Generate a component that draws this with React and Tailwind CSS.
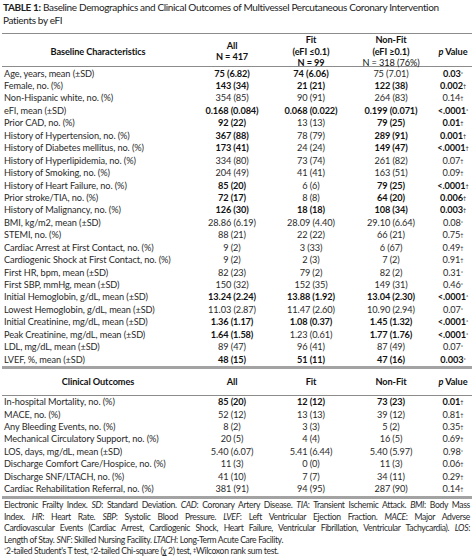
import React from 'react';

// [label, all, fit, nonFit, p, mark, bold flags for all/fit/nonFit/p]
const baseline = [
  ['Age, years, mean (±SD)', '75 (6.82)', '74 (6.06)', '75 (7.01)', '0.03', '*', '1101'],
  ['Female, no. (%)', '143 (34)', '21 (21)', '122 (38)', '0.002', '†', '1111'],
  ['Non-Hispanic white, no. (%)', '354 (85)', '90 (91)', '264 (83)', '0.14', '†', '0000'],
  ['eFI, mean (±SD)', '0.168 (0.084)', '0.068 (0.022)', '0.199 (0.071)', '<.0001', '*', '1111'],
  ['Prior CAD, no. (%)', '92 (22)', '13 (13)', '79 (25)', '0.01', '†', '1011'],
  ['History of Hypertension, no. (%)', '367 (88)', '78 (79)', '289 (91)', '0.001', '†', '1011'],
  ['History of Diabetes mellitus, no. (%)', '173 (41)', '24 (24)', '149 (47)', '<.0001', '†', '1011'],
  ['History of Hyperlipidemia, no. (%)', '334 (80)', '73 (74)', '261 (82)', '0.07', '†', '0000'],
  ['History of Smoking, no. (%)', '204 (49)', '41 (41)', '163 (51)', '0.09', '†', '0000'],
  ['History of Heart Failure, no. (%)', '85 (20)', '6 (6)', '79 (25)', '<.0001', '†', '1011'],
  ['Prior stroke/TIA, no. (%)', '72 (17)', '8 (8)', '64 (20)', '0.006', '†', '1011'],
  ['History of Malignancy, no. (%)', '126 (30)', '18 (18)', '108 (34)', '0.003', '†', '1111'],
  ['BMI, kg/m2, mean (±SD)', '28.86 (6.19)', '28.09 (4.40)', '29.10 (6.64)', '0.08', '*', '0000'],
  ['STEMI, no. (%)', '88 (21)', '22 (22)', '66 (21)', '0.75', '†', '0000'],
  ['Cardiac Arrest at First Contact, no. (%)', '9 (2)', '3 (33)', '6 (67)', '0.49', '†', '0000'],
  ['Cardiogenic Shock at First Contact, no. (%)', '9 (2)', '2 (3)', '7 (2)', '0.91', '†', '0000'],
  ['First HR, bpm, mean (±SD)', '82 (23)', '79 (2)', '82 (2)', '0.31', '*', '0000'],
  ['First SBP, mmHg, mean (±SD)', '150 (32)', '152 (35)', '149 (31)', '0.46', '*', '0000'],
  ['Initial Hemoglobin, g/dL, mean (±SD)', '13.24 (2.24)', '13.88 (1.92)', '13.04 (2.30)', '<.0001', '*', '1111'],
  ['Lowest Hemoglobin, g/dL, mean (±SD)', '11.03 (2.87)', '11.47 (2.60)', '10.90 (2.94)', '0.07', '*', '0000'],
  ['Initial Creatinine, mg/dL, mean (±SD)', '1.36 (1.17)', '1.08 (0.37)', '1.45 (1.32)', '<.0001', '*', '1111'],
  ['Peak Creatinine, mg/dL, mean (±SD)', '1.64 (1.58)', '1.23 (0.61)', '1.77 (1.76)', '<.0001', '*', '1011'],
  ['LDL, mg/dL, mean (±SD)', '89 (47)', '96 (41)', '87 (49)', '0.07', '*', '0000'],
  ['LVEF, %, mean (±SD)', '48 (15)', '51 (11)', '47 (16)', '0.003', '*', '1111'],
];

const outcomes = [
  ['In-hospital Mortality, no. (%)', '85 (20)', '12 (12)', '73 (23)', '0.01', '†', '1111'],
  ['MACE, no. (%)', '52 (12)', '13 (13)', '39 (12)', '0.81', '†', '0000'],
  ['Any Bleeding Events, no. (%)', '8 (2)', '3 (3)', '5 (2)', '0.35', '†', '0000'],
  ['Mechanical Circulatory Support, no. (%)', '20 (5)', '4 (4)', '16 (5)', '0.69', '†', '0000'],
  ['LOS, days, mg/dL, mean (±SD)', '5.40 (6.07)', '5.41 (6.44)', '5.40 (5.97)', '0.98', '*', '0000'],
  ['Discharge Comfort Care/Hospice, no. (%)', '11 (3)', '0 (0)', '11 (3)', '0.06', '†', '0000'],
  ['Discharge SNF/LTACH, no. (%)', '41 (10)', '7 (7)', '34 (11)', '0.29', '†', '0000'],
  ['Cardiac Rehabilitation Referral, no. (%)', '381 (91)', '94 (95)', '287 (90)', '0.14', '†', '0000'],
];

const cols = 'grid grid-cols-[188px_84px_74px_86px_38px]';

function Row({ r }) {
  const [label, a, f, n, p, mark, bold] = r;
  const w = (i) => (bold[i] === '1' ? 'font-bold text-[#111]' : '');
  return (
    <div className={`${cols} h-[12.45px] items-center leading-none`}>
      <div className="pl-[2px] whitespace-nowrap">{label}</div>
      <div className={`text-center ${w(0)}`}>{a}</div>
      <div className={`text-center ${w(1)}`}>{f}</div>
      <div className={`text-center ${w(2)}`}>{n}</div>
      <div className={`text-center whitespace-nowrap ${w(3)}`}>
        {p}
        <sup className="text-[5.5px] font-normal relative -top-[1px]">{mark}</sup>
      </div>
    </div>
  );
}

export default function App() {
  return (
    <div className="w-[474px] h-[558px] bg-white text-[#2a2a2a] text-[9.2px] tracking-[-0.01em] px-[2px] overflow-hidden" style={{ fontFamily: 'Lato, "Open Sans", sans-serif' }}>
      <div className="text-[10px] leading-[13px] pt-[1px] pl-[1px] text-[#222] tracking-[-0.035em] whitespace-nowrap">
        <span className="font-bold">TABLE 1:</span> Baseline Demographics and Clinical Outcomes of Multivessel Percutaneous Coronary Intervention
        <br />
        Patients by eFI
      </div>

      <div className="mt-[6px] border-t-[1.5px] border-[#8c8c8c]" />
      <div className={`${cols} h-[32px] items-center font-bold text-[#111] leading-[11.5px]`}>
        <div className="text-center pl-[4px]">Baseline Characteristics</div>
        <div className="text-center">All<br />N = 417</div>
        <div className="text-center">Fit<br />(eFI ≤0.1)<br />N = 99</div>
        <div className="text-center">Non-Fit<br />(eFI ≥0.1)<br /><span className="font-normal">N = 318 (76%)</span></div>
        <div className="text-center"><i>p</i> Value</div>
      </div>
      <div className="border-t-[1.5px] border-[#8c8c8c]" />

      {baseline.map((r) => <Row key={r[0]} r={r} />)}

      <div className="border-t-[3px] border-[#a3a3a3]" />
      <div className={`${cols} h-[26px] items-center font-bold text-[#111]`}>
        <div className="text-center pl-[4px]">Clinical Outcomes</div>
        <div className="text-center">All</div>
        <div className="text-center">Fit</div>
        <div className="text-center">Non-Fit</div>
        <div className="text-center"><i>p</i> Value</div>
      </div>
      <div className="border-t-[1.5px] border-[#8c8c8c]" />

      {outcomes.map((r) => <Row key={r[0]} r={r} />)}

      <div className="mt-[1px] border-t-[3px] border-[#a3a3a3]" />
      <div className="pl-[2px] pr-[2px] pt-[1px] leading-[11.6px] text-[8.6px] tracking-[-0.04em] whitespace-nowrap">
        <div className="text-justify [text-align-last:justify]">
          Electronic Frailty Index. <i>SD</i>: Standard Deviation. <i>CAD</i>: Coronary Artery Disease. <i>TIA</i>: Transient Ischemic Attack. <i>BMI</i>: Body Mass
        </div>
        <div className="text-justify [text-align-last:justify]">
          Index. <i>HR</i>: Heart Rate. <i>SBP</i>: Systolic Blood Pressure. <i>LVEF</i>: Left Ventricular Ejection Fraction. <i>MACE</i>: Major Adverse
        </div>
        <div className="text-justify [text-align-last:justify]">
          Cardiovascular Events (Cardiac Arrest, Cardiogenic Shock, Heart Failure, Ventricular Fibrillation, Ventricular Tachycardia). <i>LOS</i>:
        </div>
        <div>
          Length of Stay. <i>SNF</i>: Skilled Nursing Facility. <i>LTACH</i>: Long-Term Acute Care Facility.
        </div>
        <div>
          <sup className="text-[5.5px]">*</sup>2-tailed Student's T test, <sup className="text-[5.5px]">†</sup>2-tailed Chi-square (<u>χ</u> 2) test, <sup className="text-[5.5px]">‡</sup>Wilcoxon rank sum test.
        </div>
      </div>
      <div className="mt-[1px] border-t-[1.5px] border-[#8c8c8c]" />
    </div>
  );
}
